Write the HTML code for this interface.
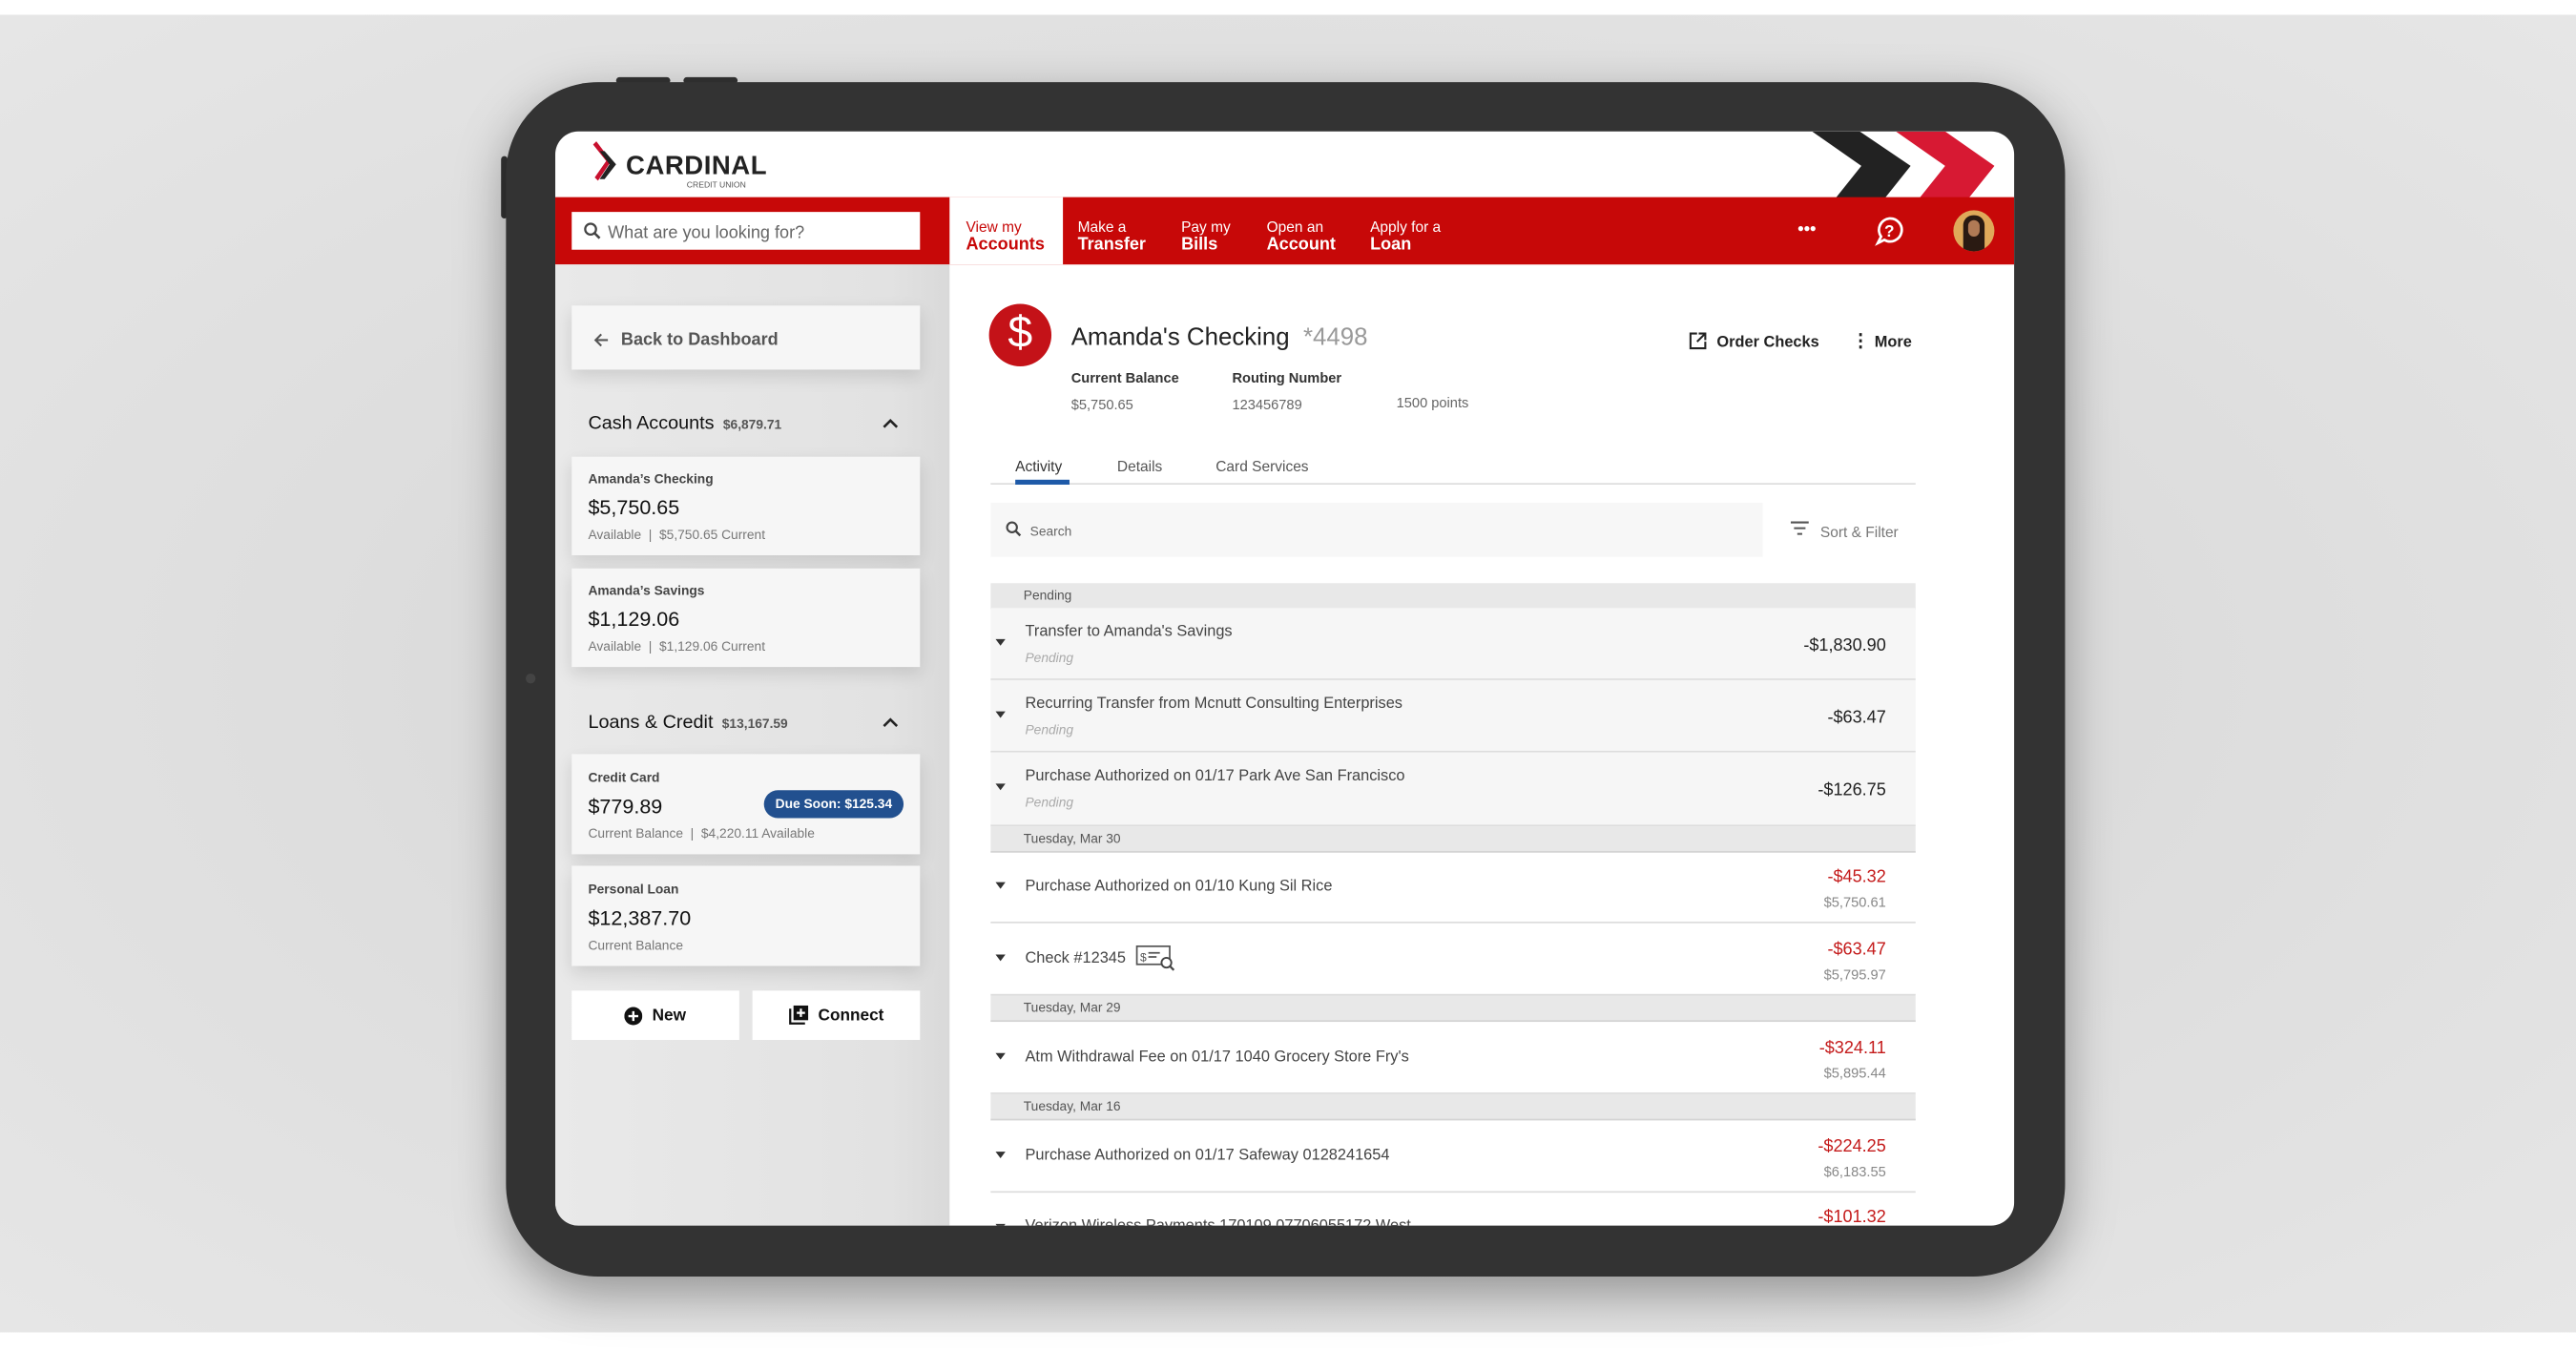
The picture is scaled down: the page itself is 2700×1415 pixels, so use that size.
<!DOCTYPE html>
<html><head><meta charset="utf-8">
<style>
html,body{margin:0;padding:0;width:2700px;height:1414px;overflow:hidden;background:#fff;}
#w{position:absolute;left:0;top:0;width:1568px;height:822px;transform:scale(1.72194);transform-origin:0 0;font-family:"Liberation Sans",sans-serif;}
.a{position:absolute;}
.bg{left:0;top:9px;width:1568px;height:802px;background:radial-gradient(ellipse at 50% 50%,#d2d2d2 0%,#dedede 55%,#e6e6e6 100%);}
.tab{left:308px;top:50px;width:949px;height:727px;background:#333;border-radius:56px;box-shadow:0 10px 30px rgba(0,0,0,.35);}
.scr{left:338px;top:80px;width:888px;height:666px;background:#fff;border-radius:14px;overflow:hidden;}
.t{position:absolute;white-space:nowrap;margin-top:1.5px;}
.card{position:absolute;left:10px;width:212px;background:#f6f6f6;box-shadow:0 4px 10px rgba(0,0,0,.12);}
.row{position:absolute;left:265px;width:563px;border-bottom:1px solid #ddd;}
.hdr{position:absolute;left:265px;width:563px;height:15px;background:#e8e8e8;border-bottom:1px solid #d4d4d4;font-size:8px;color:#555;}
.hdr span{position:absolute;left:20px;top:3px;}
.arr{position:absolute;left:3px;width:0;height:0;border-left:3px solid transparent;border-right:3px solid transparent;border-top:4px solid #333;margin-top:-1px;}
.desc{position:absolute;left:21px;font-size:9.5px;color:#444;margin-top:1px;}
.pend{position:absolute;left:21px;font-size:8px;color:#aaa;font-style:italic;margin-top:1px;}
.amt{position:absolute;right:18px;font-size:10.5px;text-align:right;margin-top:1px;}
.bal{position:absolute;right:18px;font-size:8.5px;color:#888;text-align:right;}
.red{color:#c41a1a;}
</style></head><body>
<div id="w">
<div class="a bg"></div>
<div class="a" style="left:375px;top:47px;width:33px;height:4px;background:#333;border-radius:2px"></div>
<div class="a" style="left:416px;top:47px;width:33px;height:4px;background:#333;border-radius:2px"></div>
<div class="a" style="left:305px;top:95px;width:4px;height:38px;background:#333;border-radius:2px"></div>
<div class="a tab"></div>
<div class="a" style="left:320px;top:410px;width:6px;height:6px;border-radius:3px;background:#444"></div>
<div class="a scr">
  <!-- header -->
  <svg class="a" style="left:22px;top:6px" width="20" height="26" viewBox="0 0 20 26"><path d="M3 0 L12 12 L4 24 L2 22 L9 12 L1 2Z" fill="#c8102e"/><path d="M8 6 L15 14 L8 23 L5 23 L11 14 L5 6Z" fill="#222"/></svg>
  <div class="t" style="left:43px;top:11px;font-size:16px;font-weight:bold;color:#222;letter-spacing:.3px">CARDINAL</div>
  <div class="t" style="left:80px;top:28px;font-size:5px;color:#555">CREDIT UNION</div>
  <svg class="a" style="left:0;top:0" width="888" height="41" viewBox="0 0 888 41"><polygon points="765,0 794,0 825,21 809,41 779,41 795,21" fill="#222"/><polygon points="816,0 846,0 876,21 860,41 830,41 846,21" fill="#d71933"/></svg>
  <!-- red bar -->
  <div class="a" style="left:0;top:40px;width:888px;height:41px;background:#c70808"></div>
  <div class="a" style="left:240px;top:40px;width:69px;height:41px;background:#fff"></div>
  <div class="a" style="left:10px;top:49px;width:212px;height:23px;background:#fff"></div>
  <svg class="a" style="left:17px;top:55px" width="11" height="11" viewBox="0 0 11 11"><circle cx="4.5" cy="4.5" r="3.3" stroke="#444" stroke-width="1.3" fill="none"/><path d="M7 7 L10 10" stroke="#444" stroke-width="1.5"/></svg>
  <div class="t" style="left:32px;top:54px;font-size:10.5px;color:#666">What are you looking for?</div>
  <div class="t" style="left:250px;top:51px;font-size:9px;color:#c70808;line-height:11px">View my<br><b style="font-size:10.5px">Accounts</b></div>
  <div class="t" style="left:318px;top:51px;font-size:9px;color:#fff;line-height:11px">Make a<br><b style="font-size:10.5px">Transfer</b></div>
  <div class="t" style="left:381px;top:51px;font-size:9px;color:#fff;line-height:11px">Pay my<br><b style="font-size:10.5px">Bills</b></div>
  <div class="t" style="left:433px;top:51px;font-size:9px;color:#fff;line-height:11px">Open an<br><b style="font-size:10.5px">Account</b></div>
  <div class="t" style="left:496px;top:51px;font-size:9px;color:#fff;line-height:11px">Apply for a<br><b style="font-size:10.5px">Loan</b></div>
  <div class="t" style="left:756px;top:54px;font-size:7px;color:#fff;letter-spacing:-0.5px">●●●</div>
  <svg class="a" style="left:802px;top:51px" width="20" height="20" viewBox="0 0 20 20"><path d="M10 2 a7 7 0 1 1 -3 13 L3 17 L5 13 A7 7 0 0 1 10 2Z" fill="none" stroke="#fff" stroke-width="1.6"/><text x="10" y="13" font-size="10" font-weight="bold" fill="#fff" text-anchor="middle" font-family="Liberation Sans">?</text></svg>
  <div class="a" style="left:851px;top:48px;width:25px;height:25px;border-radius:50%;background:#e0a95a;overflow:hidden"><div class="a" style="left:6px;top:3px;width:13px;height:22px;border-radius:6px 6px 2px 2px;background:#2a1a12"></div><div class="a" style="left:9px;top:6px;width:7px;height:10px;border-radius:4px;background:#b07a55"></div></div>
  <!-- sidebar -->
  <div class="a" style="left:0;top:81px;width:240px;height:585px;background:linear-gradient(90deg,#e9e9e9,#e2e2e2 85%,#d9d9d9);overflow:hidden">
    <div class="card" style="top:25px;height:39px"></div>
    <svg class="a" style="left:23px;top:41px" width="10" height="10" viewBox="0 0 10 10"><path d="M9 5H1.5M5 1.5L1.5 5L5 8.5" stroke="#555" stroke-width="1.2" fill="none"/></svg>
    <div class="t" style="left:40px;top:38px;font-size:10.5px;font-weight:bold;color:#555">Back to Dashboard</div>
    <div class="t" style="left:20px;top:89px;font-size:11.5px;color:#111">Cash Accounts <b style="font-size:8px;color:#555">&nbsp;$6,879.71</b></div>
    <svg class="a" style="left:199px;top:93px" width="10" height="7" viewBox="0 0 10 7"><path d="M1 6L5 2L9 6" stroke="#222" stroke-width="1.5" fill="none"/></svg>
    <div class="card" style="top:117px;height:60px"></div>
    <div class="t" style="left:20px;top:124px;font-size:8px;font-weight:bold;color:#444">Amanda’s Checking</div>
    <div class="t" style="left:20px;top:139px;font-size:12.5px;color:#111">$5,750.65</div>
    <div class="t" style="left:20px;top:158px;font-size:8px;color:#777">Available &nbsp;| &nbsp;$5,750.65 Current</div>
    <div class="card" style="top:185px;height:60px"></div>
    <div class="t" style="left:20px;top:192px;font-size:8px;font-weight:bold;color:#444">Amanda’s Savings</div>
    <div class="t" style="left:20px;top:207px;font-size:12.5px;color:#111">$1,129.06</div>
    <div class="t" style="left:20px;top:226px;font-size:8px;color:#777">Available &nbsp;| &nbsp;$1,129.06 Current</div>
    <div class="t" style="left:20px;top:271px;font-size:11.5px;color:#111">Loans &amp; Credit <b style="font-size:8px;color:#555">&nbsp;$13,167.59</b></div>
    <svg class="a" style="left:199px;top:275px" width="10" height="7" viewBox="0 0 10 7"><path d="M1 6L5 2L9 6" stroke="#222" stroke-width="1.5" fill="none"/></svg>
    <div class="card" style="top:298px;height:61px"></div>
    <div class="t" style="left:20px;top:306px;font-size:8px;font-weight:bold;color:#444">Credit Card</div>
    <div class="t" style="left:20px;top:321px;font-size:12.5px;color:#111">$779.89</div>
    <div class="a" style="left:127px;top:320px;width:85px;height:17px;border-radius:9px;background:#22508f"></div>
    <div class="t" style="left:127px;top:322px;width:85px;text-align:center;font-size:8px;font-weight:bold;color:#fff">Due Soon: $125.34</div>
    <div class="t" style="left:20px;top:340px;font-size:8px;color:#777">Current Balance &nbsp;| &nbsp;$4,220.11 Available</div>
    <div class="card" style="top:366px;height:61px"></div>
    <div class="t" style="left:20px;top:374px;font-size:8px;font-weight:bold;color:#444">Personal Loan</div>
    <div class="t" style="left:20px;top:389px;font-size:12.5px;color:#111">$12,387.70</div>
    <div class="t" style="left:20px;top:408px;font-size:8px;color:#777">Current Balance</div>
    <div class="a" style="left:10px;top:442px;width:102px;height:30px;background:#fff"></div>
    <div class="a" style="left:120px;top:442px;width:102px;height:30px;background:#fff"></div>
    <svg class="a" style="left:42px;top:452px" width="11" height="11" viewBox="0 0 11 11"><circle cx="5.5" cy="5.5" r="5.5" fill="#111"/><path d="M5.5 2.5V8.5M2.5 5.5H8.5" stroke="#fff" stroke-width="1.4"/></svg>
    <div class="t" style="left:59px;top:450px;font-size:10px;font-weight:bold;color:#111">New</div>
    <svg class="a" style="left:142px;top:451px" width="12" height="12" viewBox="0 0 12 12"><rect x="3" y="0" width="9" height="9" fill="#111"/><path d="M1 2V11H10" stroke="#111" stroke-width="1.3" fill="none"/><path d="M7.5 2V7M5 4.5H10" stroke="#fff" stroke-width="1.3"/></svg>
    <div class="t" style="left:160px;top:450px;font-size:10px;font-weight:bold;color:#111">Connect</div>
  </div>
  <!-- main -->
  <div class="a" style="left:264px;top:105px;width:38px;height:38px;border-radius:50%;background:#c41218"></div>
  <div class="t" style="left:264px;top:105px;width:38px;text-align:center;font-size:27px;color:#fff">$</div>
  <div class="t" style="left:314px;top:115px;font-size:15px;color:#222">Amanda's Checking &nbsp;<span style="color:#999">*4498</span></div>
  <svg class="a" style="left:690px;top:122px" width="11" height="11" viewBox="0 0 11 11"><path d="M5 1H1V10H10V6M6 1H10V5M10 1L5 6" stroke="#222" stroke-width="1.2" fill="none"/></svg>
  <div class="t" style="left:707px;top:121px;font-size:9.5px;font-weight:bold;color:#222">Order Checks</div>
  <div class="t" style="left:789px;top:119px;font-size:11px;font-weight:bold;color:#222">⋮</div>
  <div class="t" style="left:803px;top:121px;font-size:9.5px;font-weight:bold;color:#222">More</div>
  <div class="t" style="left:314px;top:143px;font-size:8.5px;font-weight:bold;color:#333">Current Balance</div>
  <div class="t" style="left:412px;top:143px;font-size:8.5px;font-weight:bold;color:#333">Routing Number</div>
  <div class="t" style="left:314px;top:159px;font-size:8.5px;color:#666">$5,750.65</div>
  <div class="t" style="left:412px;top:159px;font-size:8.5px;color:#666">123456789</div>
  <div class="t" style="left:512px;top:158px;font-size:8.5px;color:#666">1500 points</div>
  <div class="t" style="left:280px;top:197px;font-size:9px;color:#333">Activity</div>
  <div class="t" style="left:342px;top:197px;font-size:9px;color:#555">Details</div>
  <div class="t" style="left:402px;top:197px;font-size:9px;color:#555">Card Services</div>
  <div class="a" style="left:265px;top:214px;width:563px;height:1px;background:#ddd"></div>
  <div class="a" style="left:280px;top:212px;width:33px;height:3px;background:#1e5aa8"></div>
  <div class="a" style="left:265px;top:226px;width:470px;height:33px;background:#f7f7f7"></div>
  <svg class="a" style="left:274px;top:237px" width="10" height="10" viewBox="0 0 10 10"><circle cx="4" cy="4" r="3" stroke="#444" stroke-width="1.2" fill="none"/><path d="M6.3 6.3L9 9" stroke="#444" stroke-width="1.4"/></svg>
  <div class="t" style="left:289px;top:237px;font-size:8px;color:#666">Search</div>
  <svg class="a" style="left:752px;top:237px" width="11" height="9" viewBox="0 0 11 9"><path d="M0 1H11M2 4.5H9M4 8H7" stroke="#555" stroke-width="1.2"/></svg>
  <div class="t" style="left:770px;top:237px;font-size:9px;color:#777">Sort &amp; Filter</div>
  <!-- list -->
  <div class="hdr" style="top:275px"><span>Pending</span></div>
  <div class="row" style="top:290px;height:43px;background:#f6f6f6"><div class="arr" style="top:20px"></div><div class="desc" style="top:8px">Transfer to Amanda's Savings</div><div class="pend" style="top:25px">Pending</div><div class="amt" style="top:16px;color:#222">-$1,830.90</div></div>
  <div class="row" style="top:334px;height:43px;background:#f6f6f6"><div class="arr" style="top:20px"></div><div class="desc" style="top:8px">Recurring Transfer from Mcnutt Consulting Enterprises</div><div class="pend" style="top:25px">Pending</div><div class="amt" style="top:16px;color:#222">-$63.47</div></div>
  <div class="row" style="top:378px;height:44px;background:#f6f6f6"><div class="arr" style="top:20px"></div><div class="desc" style="top:8px">Purchase Authorized on 01/17 Park Ave San Francisco</div><div class="pend" style="top:25px">Pending</div><div class="amt" style="top:16px;color:#222">-$126.75</div></div>
  <div class="hdr" style="top:423px"><span>Tuesday, Mar 30</span></div>
  <div class="row" style="top:438px;height:43px"><div class="arr" style="top:20px"></div><div class="desc" style="top:15px">Purchase Authorized on 01/10 Kung Sil Rice</div><div class="amt red" style="top:9px">-$45.32</div><div class="bal" style="top:26px">$5,750.61</div></div>
  <div class="row" style="top:482px;height:43px"><div class="arr" style="top:20px"></div><div class="desc" style="top:15px">Check #12345</div>
    <svg class="a" style="left:88px;top:13px" width="25" height="17" viewBox="0 0 25 17"><rect x="1" y="1" width="20" height="11" fill="none" stroke="#555" stroke-width="1"/><text x="3" y="10" font-size="7" fill="#555" font-family="Liberation Sans">$</text><path d="M8 5H15M8 7.5H13" stroke="#555"/><circle cx="19" cy="11" r="3" fill="#fff" stroke="#444" stroke-width="1.1"/><path d="M21 13L23.5 15.5" stroke="#444" stroke-width="1.3"/></svg>
    <div class="amt red" style="top:9px">-$63.47</div><div class="bal" style="top:26px">$5,795.97</div></div>
  <div class="hdr" style="top:526px"><span>Tuesday, Mar 29</span></div>
  <div class="row" style="top:542px;height:43px"><div class="arr" style="top:20px"></div><div class="desc" style="top:15px">Atm Withdrawal Fee on 01/17 1040 Grocery Store Fry's</div><div class="amt red" style="top:9px">-$324.11</div><div class="bal" style="top:26px">$5,895.44</div></div>
  <div class="hdr" style="top:586px"><span>Tuesday, Mar 16</span></div>
  <div class="row" style="top:602px;height:43px"><div class="arr" style="top:20px"></div><div class="desc" style="top:15px">Purchase Authorized on 01/17 Safeway 0128241654</div><div class="amt red" style="top:9px">-$224.25</div><div class="bal" style="top:26px">$6,183.55</div></div>
  <div class="row" style="top:646px;height:43px;border:none"><div class="arr" style="top:20px"></div><div class="desc" style="top:14px">Verizon Wireless Payments 170109 07706055172 West</div><div class="amt red" style="top:8px">-$101.32</div></div>
</div>
</div>
</body></html>
